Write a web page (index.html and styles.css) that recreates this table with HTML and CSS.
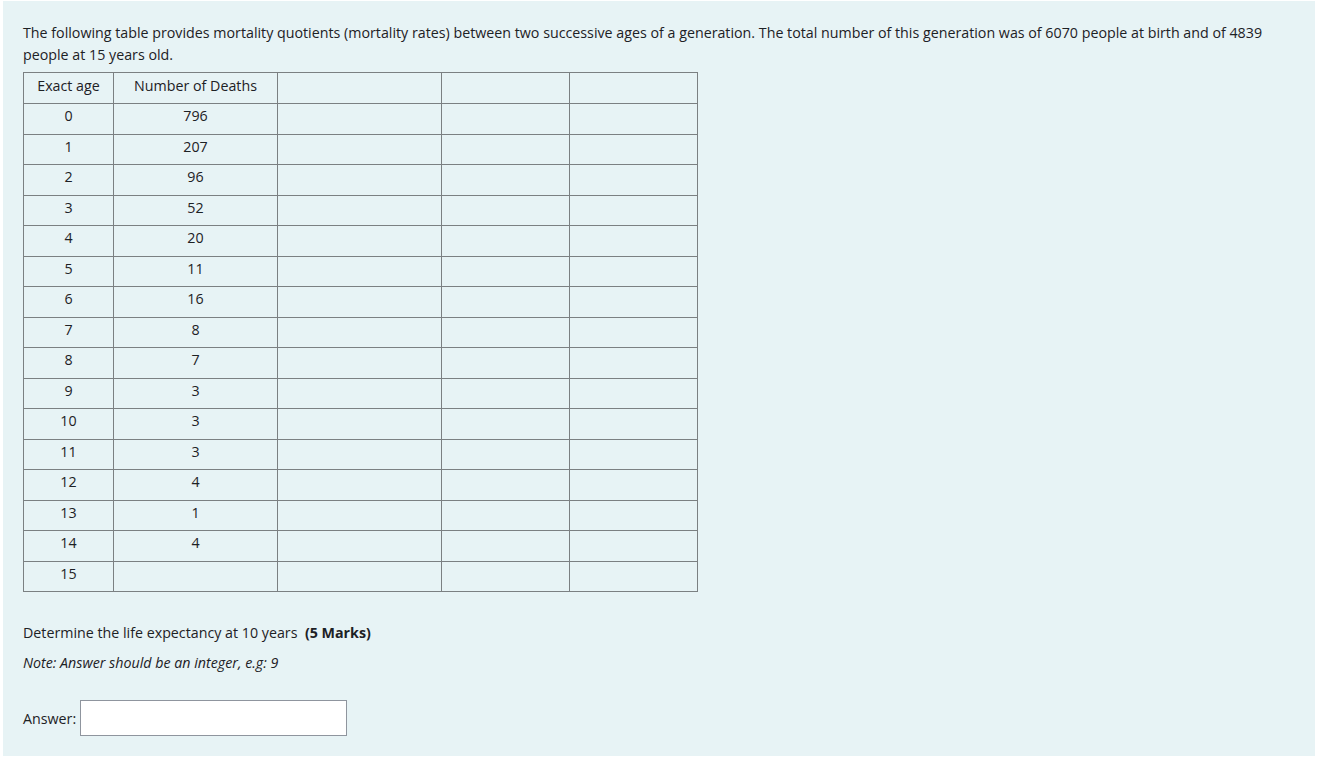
FILE: index.html
```html
<!DOCTYPE html>
<html>
<head>
<meta charset="utf-8">
<link rel="stylesheet" href="styles.css">
</head>
<body>
<div class="panel">
  <p class="intro">The following table provides mortality quotients (mortality rates) between two successive ages of a generation. The total number of this generation was of 6070 people at birth and of 4839 people at 15 years old.</p>
  <table class="grid">
    <colgroup>
      <col class="c1"><col class="c2"><col class="c3"><col class="c4"><col class="c5">
    </colgroup>
    <tr class="head"><td>Exact age</td><td>Number of Deaths</td><td></td><td></td><td></td></tr>
    <tr><td>0</td><td>796</td><td></td><td></td><td></td></tr>
    <tr><td>1</td><td>207</td><td></td><td></td><td></td></tr>
    <tr><td>2</td><td>96</td><td></td><td></td><td></td></tr>
    <tr><td>3</td><td>52</td><td></td><td></td><td></td></tr>
    <tr><td>4</td><td>20</td><td></td><td></td><td></td></tr>
    <tr><td>5</td><td>11</td><td></td><td></td><td></td></tr>
    <tr><td>6</td><td>16</td><td></td><td></td><td></td></tr>
    <tr><td>7</td><td>8</td><td></td><td></td><td></td></tr>
    <tr><td>8</td><td>7</td><td></td><td></td><td></td></tr>
    <tr><td>9</td><td>3</td><td></td><td></td><td></td></tr>
    <tr><td>10</td><td>3</td><td></td><td></td><td></td></tr>
    <tr><td>11</td><td>3</td><td></td><td></td><td></td></tr>
    <tr><td>12</td><td>4</td><td></td><td></td><td></td></tr>
    <tr><td>13</td><td>1</td><td></td><td></td><td></td></tr>
    <tr><td>14</td><td>4</td><td></td><td></td><td></td></tr>
    <tr><td>15</td><td></td><td></td><td></td><td></td></tr>
  </table>
  <p class="question">Determine the life expectancy at 10 years&nbsp; <strong>(5 Marks)</strong></p>
  <p class="note"><em>Note: Answer should be an integer, e.g: 9</em></p>
  <div class="answer">
    <label class="answer-label" for="ans">Answer:</label>
    <input class="answer-input" id="ans" type="text">
  </div>
</div>
</body>
</html>
```
FILE: styles.css
```css
html, body {
  margin: 0;
  padding: 0;
  background: #ffffff;
}
body {
  font-family: "Open Sans", "Noto Sans", sans-serif;
  font-size: 14.25px;
  color: #1d2125;
}
.panel {
  margin: 1px 11px 0 3px;
  height: 755px;
  box-sizing: border-box;
  background: #e7f3f5;
  padding: 21px 20px 20px 20px;
}
p {
  margin: 0;
  line-height: 22px;
}
.intro {
  margin-bottom: 6px;
  padding-right: 20px;
}
.grid {
  border-collapse: collapse;
  table-layout: fixed;
  width: 674px;
}
.c1 { width: 90px; }
.c2 { width: 164px; }
.c3 { width: 164px; }
.c4 { width: 128px; }
.c5 { width: 128px; }
.grid td {
  border: 1px solid #7b8082;
  text-align: center;
  vertical-align: middle;
  padding: 0 0 5px 0;
  height: 24.5px;
  line-height: 20px;
}
.grid tr.head td {
  height: 25px;
}
.question {
  margin-top: 30px;
}
.note {
  margin-top: 8px;
}
.answer {
  display: flex;
  align-items: center;
  margin-top: 26px;
}
.answer-label {
  margin-right: 4px;
}
.answer-input {
  width: 267px;
  height: 36px;
  box-sizing: border-box;
  border: 1px solid #8f959e;
  background: #ffffff;
  margin: 0;
  padding: 0 8px;
  font: inherit;
}
```
